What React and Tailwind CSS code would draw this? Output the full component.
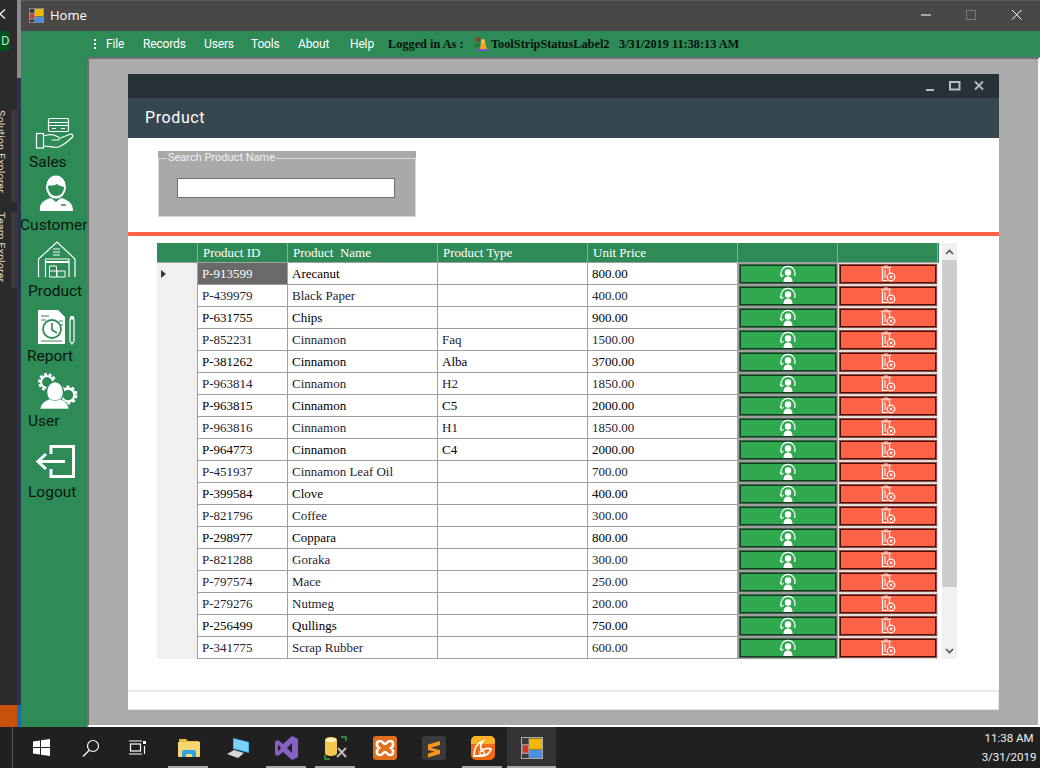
import React from "react";

const rows = [
  ["P-913599", "Arecanut", "", "800.00", 1],
  ["P-439979", "Black Paper", "", "400.00", 0],
  ["P-631755", "Chips", "", "900.00", 1],
  ["P-852231", "Cinnamon", "Faq", "1500.00", 0],
  ["P-381262", "Cinnamon", "Alba", "3700.00", 1],
  ["P-963814", "Cinnamon", "H2", "1850.00", 0],
  ["P-963815", "Cinnamon", "C5", "2000.00", 1],
  ["P-963816", "Cinnamon", "H1", "1850.00", 0],
  ["P-964773", "Cinnamon", "C4", "2000.00", 1],
  ["P-451937", "Cinnamon Leaf Oil", "", "700.00", 0],
  ["P-399584", "Clove", "", "400.00", 1],
  ["P-821796", "Coffee", "", "300.00", 0],
  ["P-298977", "Coppara", "", "800.00", 1],
  ["P-821288", "Goraka", "", "300.00", 0],
  ["P-797574", "Mace", "", "250.00", 0],
  ["P-279276", "Nutmeg", "", "200.00", 0],
  ["P-256499", "Qullings", "", "750.00", 1],
  ["P-341775", "Scrap Rubber", "", "600.00", 0],
];

const serif = "font-['Liberation_Serif',serif]";
const gridCols = "grid grid-cols-[41px_90px_150px_150px_150px_100px_100px]";

function SalesIcon() {
  return (
    <svg className="block w-[60px] h-[36px] ml-[-1px]" viewBox="0 0 60 36" fill="none" stroke="#fff" strokeWidth="1.2">
      <rect x="28.5" y="3.5" width="20" height="13" rx="1.5" />
      <path d="M28.5 7.5h20M28.5 10.5h20" />
      <path d="M32 13.5h4M41 13.5h4" />
      <rect x="16.5" y="18.5" width="7" height="14.5" />
      <path d="M23.5 21c4-1.500 7-2 10-1l5 2c2 1 1 3-1 3h-6" />
      <path d="M23.500 31c5 0 11 2 15 1 5-2 10-6 14-10 1-1 0-3-2-3l-10 4" />
    </svg>
  );
}

function CustomerIcon() {
  return (
    <svg className="block w-[60px] h-[37px] ml-[-1px]" viewBox="0 0 60 37" fill="none">
      <ellipse cx="36" cy="12" rx="10" ry="11.500" fill="#fff" />
      <path d="M28 11c3-1 6 0 9-2 2 2 5 2 7 3 0 5-3 9-8 9s-8-5-8-10z" fill="#2e8b57" />
      <path d="M20 36c-1-7 3-11 11-13l5 4 5-4c8 2 12 6 12 13z" fill="#fff" />
      <path d="M41 30h5" stroke="#2e8b57" strokeWidth="1.500" />
    </svg>
  );
}

function ProductIcon() {
  return (
    <svg className="block w-[60px] h-[38px] ml-[-1px]" viewBox="0 0 60 38" fill="none" stroke="#fff" strokeWidth="1.2">
      <path d="M18.500 37V19L37 2l18 17v18" />
      <path d="M25.500 37V19h23.500v18" />
      <path d="M33 9h7M33 12h7M33 15h7" />
      <path d="M25.500 22h23.500" strokeWidth="2" />
      <path d="M29.500 26h7v11h-7zM29.500 31h7M37 31h8v6h-8z" strokeWidth="1" />
    </svg>
  );
}

function ReportIcon() {
  return (
    <svg className="block w-[60px] h-[38px] ml-[-1px]" viewBox="0 0 60 38" fill="none">
      <path d="M18 2h20l7 7v27H18z" fill="#fff" />
      <circle cx="32" cy="21" r="9" fill="#fff" stroke="#2e8b57" strokeWidth="1.800" />
      <path d="M32 15v7l5 3" stroke="#2e8b57" strokeWidth="1.600" />
      <path d="M21 8h8M21 12h5M21 33h21M39 13h4M41 17h2" stroke="#2e8b57" strokeWidth="1.200" />
      <path d="M50 11h4v22l-2 3-2-3z" fill="#2e8b57" stroke="#fff" strokeWidth="1.200" />
      <path d="M50 8h4v3h-4z" fill="#fff" />
    </svg>
  );
}

function UserIcon() {
  return (
    <svg className="block w-[60px] h-[38px] ml-[-1px]" viewBox="0 0 60 38" fill="none">
      <circle cx="27" cy="10" r="7" stroke="#fff" strokeWidth="4" strokeDasharray="2.600 1.700" />
      <circle cx="27" cy="10" r="6" stroke="#fff" strokeWidth="2" />
      <circle cx="48" cy="23" r="7.500" stroke="#fff" strokeWidth="4" strokeDasharray="2.800 2" />
      <circle cx="48" cy="23" r="6.500" stroke="#fff" strokeWidth="2.500" />
      <ellipse cx="35" cy="20" rx="8.500" ry="10.500" fill="#fff" stroke="#2e8b57" strokeWidth="1.400" />
      <path d="M20 37c1-6 6-9 10-10 3 2 7 2 10 0 4 1 8 4 9 10z" fill="#fff" stroke="#2e8b57" strokeWidth="0.600" />
    </svg>
  );
}

function LogoutIcon() {
  return (
    <svg className="block w-[60px] h-[37px] ml-[-1px]" viewBox="0 0 60 37" fill="none" stroke="#fff">
      <path d="M31 11V3.500h22.500v30H31V26" strokeWidth="3" />
      <path d="M19 18.500h26" strokeWidth="3" />
      <path d="M26 11l-8 7.500 8 7.500" strokeWidth="3" />
    </svg>
  );
}

function SideItem({ icon, label, className, labelClass }) {
  return (
    <div className={className}>
      {icon}
      <div className={"h-[18px] leading-[18px] text-[15.5px] text-[#07170e] whitespace-nowrap " + labelClass}>{label}</div>
    </div>
  );
}

function GreenBtn() {
  return (
    <div className="h-[22px] border-r border-b border-[#a0a0a0] bg-[#a0a0a0] p-[1.5px] pl-[2px] pt-[2px]">
      <div className="h-full border border-[#0f3d1e] outline outline-[#1c4f2c]/70 bg-[#2fa84f] flex items-center justify-center">
        <svg width="18" height="18" viewBox="0 0 18 18" fill="none">
          <path d="M2.500 11A7 7 0 1 1 15.500 11" stroke="#fff" strokeWidth="1.200" />
          <path d="M1 9l1.500 3 2.500-2" stroke="#fff" strokeWidth="1" />
          <circle cx="9" cy="7.500" r="3.200" fill="#fff" />
          <path d="M4.500 17c0-4 2-5.500 4.500-5.500s4.500 1.500 4.500 5.500z" fill="#fff" />
        </svg>
      </div>
    </div>
  );
}

function RedBtn() {
  return (
    <div className="h-[22px] border-r border-b border-[#dcdcdc] bg-[#eeded9] p-[1.5px] pl-[2px] pt-[2px]">
      <div className="h-full border border-[#4f0d03] outline outline-[#5c1005]/70 bg-[#ff6347] flex items-center justify-center">
        <svg width="16" height="17" viewBox="0 0 16 17" fill="none">
          <path d="M1 2.500h10" stroke="#ffc9bd" strokeWidth="2" />
          <path d="M4 1h4" stroke="#ffc9bd" strokeWidth="1" />
          <path d="M2.500 4v11.500h5M9.500 4v4.500" stroke="#fff" strokeWidth="1.200" />
          <path d="M5 5v8" stroke="#fff" strokeWidth="1" />
          <circle cx="11" cy="12" r="3.800" fill="#ff6347" stroke="#fff" strokeWidth="1.200" />
          <path d="M9.500 10.500l3 3M12.500 10.500l-3 3" stroke="#fff" strokeWidth="1" />
        </svg>
      </div>
    </div>
  );
}

function GridRow({ row, index }) {
  const [id, name, type, price, dark] = row;
  const weight = dark ? "text-black" : "text-[#1e2430]";
  const cell = "h-[22px] border-r border-b border-[#a0a0a0] bg-white px-[4px] leading-[21px] whitespace-nowrap overflow-hidden " + weight;
  return (
    <>
      <div className="h-[22px] bg-[#f0f0f0] border-r border-[#a0a0a0] flex items-center pl-[4px]">
        {index === 0 && <div className="w-0 h-0 border-y-[4px] border-y-transparent border-l-[5px] border-l-[#333]" />}
      </div>
      {index === 0 ? (
        <div className="h-[22px] border-r border-b border-[#a0a0a0] bg-[#696969] text-white px-[4px] leading-[21px]">{id}</div>
      ) : (
        <div className={cell}>{id}</div>
      )}
      <div className={cell}>{name}</div>
      <div className={cell}>{type}</div>
      <div className={cell}>{price}</div>
      <GreenBtn />
      <RedBtn />
    </>
  );
}

function TaskIcon({ children, active, underline }) {
  return (
    <div className={"relative w-[49px] h-full flex items-center justify-center " + (active ? "bg-[#343434]" : "")}>
      {children}
      {underline && <div className={"absolute bottom-0 h-[2px] bg-[#a8a8a8] " + (active ? "left-0 right-0" : "left-[4px] right-[5px]")} />}
    </div>
  );
}

function AppLogo({ size }) {
  return (
    <svg width={size} height={size} viewBox="0 0 22 22">
      <rect x="0.500" y="0.500" width="21" height="21" fill="#3a3a3a" stroke="#aaa" />
      <rect x="8" y="1.500" width="13" height="11" fill="#f2b705" />
      <rect x="8" y="13" width="13" height="8" fill="#4a90e2" />
      <rect x="1.500" y="8" width="6" height="8" fill="#d8342a" stroke="#bbb" strokeWidth="0.500" />
      <path d="M1 7.500h7M8 1v20M1 16.500h7" stroke="#aaa" strokeWidth="0.700" />
    </svg>
  );
}

export default function App() {
  return (
    <div className="w-[1040px] h-[768px] overflow-hidden flex flex-col bg-[#1f1f1f] font-['Roboto',sans-serif]">
      <div className="flex h-[727px]">
        {/* IDE strip behind the window */}
        <div className="w-[21px] flex shrink-0 h-full">
          <div className="w-[17px] bg-[#2b2b2e] flex flex-col overflow-hidden">
            <div className="h-[31px] flex items-center">
              <svg width="6" height="10" viewBox="0 0 6 10" className="mt-[-3px]">
                <path d="M5 0.500L0 5l5 4.500" stroke="#eee" strokeWidth="1.400" fill="none" />
              </svg>
            </div>
            <div className="w-[10px] h-[20px] bg-[#01521f] text-[#b9e6c4] text-[13px] leading-[20px] pl-[1px]">D</div>
            <div className="h-[59px]" />
            <div className="h-[92px] w-[17px] flex">
              <div className="w-[11px] overflow-hidden shrink-0">
                <div className="[writing-mode:vertical-rl] ml-[-7px] text-[11px] text-[#e0d0b8] whitespace-nowrap leading-[14px]">Solution Explorer</div>
              </div>
              <div className="w-[6px] bg-[#3a3a3d]" />
            </div>
            <div className="h-[10px]" />
            <div className="h-[76px] w-[17px] flex">
              <div className="w-[11px] overflow-hidden shrink-0">
                <div className="[writing-mode:vertical-rl] ml-[-7px] text-[11px] text-[#e0d0b8] whitespace-nowrap leading-[14px]">Team Explorer</div>
              </div>
              <div className="w-[6px] bg-[#3a3a3d]" />
            </div>
            <div className="flex-1" />
            <div className="h-[22px] bg-[#c9500a]" />
          </div>
          <div className="w-[4px] flex flex-col">
            <div className="h-[78px] bg-[#8a8a8a]" />
            <div className="flex-1 bg-[#27344f]" />
            <div className="h-[22px] bg-[#1a6ea8]" />
          </div>
        </div>

        {/* Window */}
        <div className="flex-1 flex flex-col min-w-0">
          <div className="h-[31px] bg-[#4a4846] border-t border-[#5e5c5a] flex items-center shrink-0">
            <div className="ml-[8px] mt-[-1px]"><AppLogo size={15} /></div>
            <div className="ml-[6px] text-[13px] text-white font-['Open_Sans',sans-serif] mt-[-1px]">Home</div>
            <div className="flex-1" />
            <svg width="120" height="14" viewBox="0 0 120 14" className="mt-[-2px]" fill="none">
              <path d="M1 7h10" stroke="#fff" />
              <rect x="46.500" y="2.500" width="9" height="9" stroke="#777" />
              <path d="M92 2l9.500 9.500M101.500 2L92 11.500" stroke="#fff" />
            </svg>
          </div>

          <div className="h-[26px] bg-[#2e8b57] flex items-center shrink-0 text-[12px] tracking-[-0.15px]">
            <div className="w-[85px] h-full flex items-center justify-end pr-[10px]">
              <div className="flex flex-col gap-[2px]">
                <div className="w-[2px] h-[2px] bg-white" />
                <div className="w-[2px] h-[2px] bg-white" />
                <div className="w-[2px] h-[2px] bg-white" />
              </div>
            </div>
            <div className="w-[37px] text-white">File</div>
            <div className="w-[61px] text-white">Records</div>
            <div className="w-[47px] text-white">Users</div>
            <div className="w-[47px] text-white">Tools</div>
            <div className="w-[52px] text-white">About</div>
            <div className="w-[38px] text-white">Help</div>
            <div className={serif + " text-[12.3px] tracking-normal font-bold text-[#06130c] whitespace-nowrap flex items-center"}>
              <span className="w-[84px]">Logged in As :</span>
              <svg width="17" height="16" viewBox="0 0 17 16" className="mr-[2px]">
                <circle cx="6" cy="3.500" r="2.500" fill="#7a4a20" />
                <path d="M1 11c1-3 3-4 6-4l2 4z" fill="#1f7a2e" />
                <path d="M9 6h4l2 7H8z" fill="#f5a623" />
                <circle cx="11" cy="5" r="2" fill="#f7c04a" />
                <path d="M6 13h10l1 2H6z" fill="#6a5acd" />
              </svg>
              <span className="w-[128px]">ToolStripStatusLabel2</span>
              <span>3/31/2019 11:38:13 AM</span>
            </div>
          </div>

          <div className="flex-1 flex min-h-0">
            {/* Sidebar */}
            <div className="w-[66px] bg-[#2e8b57] shrink-0 flex flex-col pt-[58px]">
              <SideItem icon={<SalesIcon />} label="Sales" labelClass="ml-[8px] mt-[2px]" />
              <SideItem icon={<CustomerIcon />} label="Customer" labelClass="ml-[-1px] mt-[4px]" className="mt-[4px]" />
              <SideItem icon={<ProductIcon />} label="Product" labelClass="ml-[7px] mt-[4px]" className="mt-[6px]" />
              <SideItem icon={<ReportIcon />} label="Report" labelClass="ml-[6px] mt-[1px]" className="mt-[8px]" />
              <SideItem icon={<UserIcon />} label="User" labelClass="ml-[7px] mt-[2px]" className="mt-[7px]" />
              <SideItem icon={<LogoutIcon />} label="Logout" labelClass="ml-[7px] mt-[3px]" className="mt-[13px]" />
            </div>

            {/* MDI area */}
            <div className="flex-1 bg-[#ababab] border-t-2 border-l-2 border-t-[#6f6f6f] border-l-[#6f6f6f] border-r-2 border-b-2 border-r-white border-b-white pt-[15px] pl-[39px]">
              <div className="w-[871px] h-[636px] bg-white flex flex-col">
                <div className="h-[24px] bg-[#263238] flex items-center justify-end shrink-0">
                  <svg width="62" height="12" viewBox="0 0 62 12" fill="none" className="mr-[11px]" stroke="#b4bfc4">
                    <path d="M0 10h8" strokeWidth="2" />
                    <rect x="24" y="2" width="9.500" height="7.500" strokeWidth="2" />
                    <path d="M49 1.500l8 8M57 1.500l-8 8" strokeWidth="1.800" />
                  </svg>
                </div>
                <div className="h-[40px] bg-[#37474f] flex items-center pl-[17px] text-white text-[16px] font-normal tracking-[0.6px] shrink-0">Product</div>

                <div className="h-[98px] shrink-0 pt-[13px] pl-[30px] border-b-4 border-[#ff6347]">
                  <div className="w-[258px] h-[66px] bg-[#a9a9a9]">
                    <fieldset className="h-[66px] border border-[#d8d8d8] px-[18px] pt-[13px] m-0">
                      <legend className="ml-[-10px] px-[1px] text-[11px] leading-[14px] text-[#f2f2f2]">Search Product Name</legend>
                      <div className="w-[218px] h-[20px] bg-white border border-[#6f6f6f]" />
                    </fieldset>
                  </div>
                </div>

                <div className="flex pl-[29px] pt-[7px] shrink-0">
                  <div className={"w-[782px] text-[13px] " + serif}>
                    <div className={gridCols + " bg-[#2e8b57] text-white h-[20px] leading-[19px]"}>
                      <div className="border-r border-b border-[#a0a0a0]" />
                      <div className="border-r border-b border-[#a0a0a0] pl-[5px]">Product ID</div>
                      <div className="border-r border-b border-[#a0a0a0] pl-[5px]">Product&nbsp; Name</div>
                      <div className="border-r border-b border-[#a0a0a0] pl-[5px]">Product Type</div>
                      <div className="border-r border-b border-[#a0a0a0] pl-[5px]">Unit Price</div>
                      <div className="border-r border-b border-[#a0a0a0]" />
                      <div className="border-r border-b border-[#a0a0a0]" />
                    </div>
                    <div className={gridCols}>
                      {rows.map((r, i) => (
                        <GridRow key={r[0]} row={r} index={i} />
                      ))}
                    </div>
                  </div>
                  <div className="ml-[3px] w-[15px] h-[416px] bg-[#f0f0f0] flex flex-col">
                    <div className="h-[17px] flex items-center justify-center">
                      <svg width="9" height="6" viewBox="0 0 9 6" fill="none"><path d="M1 5l3.500-3.500L8 5" stroke="#555" strokeWidth="1.600" /></svg>
                    </div>
                    <div className="h-[327px] bg-[#cdcdcd]" />
                    <div className="flex-1" />
                    <div className="h-[17px] flex items-center justify-center">
                      <svg width="9" height="6" viewBox="0 0 9 6" fill="none"><path d="M1 1l3.500 3.500L8 1" stroke="#555" strokeWidth="1.600" /></svg>
                    </div>
                  </div>
                </div>

                <div className="flex-1" />
                <div className="h-[20px] border-t-2 border-[#e8e8e8] border-b border-b-[#e8e8e8] border-r border-r-[#e8e8e8] shrink-0" />
              </div>
            </div>
          </div>
        </div>
      </div>

      {/* Taskbar */}
      <div className="h-[41px] bg-[#202020] flex items-center text-white relative">
        <div className="w-[1px] h-full bg-[#5a5a5a] ml-[12px] mr-[4px]" />
        <TaskIcon>
          <svg width="17" height="17" viewBox="0 0 17 17" fill="#fff"><path d="M0 2.500l7-1v6.500H0zM8 1.300L17 0v8H8zM0 9h7v6.500l-7-1zM8 9h9v8l-9-1.300z" /></svg>
        </TaskIcon>
        <TaskIcon>
          <svg width="18" height="18" viewBox="0 0 18 18" fill="none" stroke="#fff" strokeWidth="1.200"><circle cx="11" cy="7" r="5.500" /><path d="M7 11.500L1 17.500" /></svg>
        </TaskIcon>
        <TaskIcon>
          <svg width="17" height="15" viewBox="0 0 17 15" fill="none" stroke="#fff" strokeWidth="1.200" className="mr-[5px]">
            <rect x="1.500" y="4" width="10" height="7" />
            <path d="M0 1h13M0 14h13M15.500 6v8" />
            <rect x="14" y="1" width="3" height="3" fill="#fff" stroke="none" />
          </svg>
        </TaskIcon>
        <TaskIcon underline>
          <svg width="22" height="19" viewBox="0 0 22 19">
            <path d="M1 1h7l2 2h11v4H1z" fill="#e8b93c" />
            <path d="M0 4h22v14a1 1 0 0 1-1 1H1a1 1 0 0 1-1-1z" fill="#f7d774" />
            <path d="M4 19v-5a2 2 0 0 1 2-2h10a2 2 0 0 1 2 2v5h-4v-3H8v3z" fill="#2aa4e0" />
          </svg>
        </TaskIcon>
        <TaskIcon>
          <svg width="24" height="20" viewBox="0 0 24 20">
            <path d="M7 0l16 4v11L7 11z" fill="#3fb4ef" />
            <path d="M8 1l14 3.500v9L8 10z" fill="#7fd0f7" />
            <path d="M1 16l7-4 10 3-6 5z" fill="#d8d8d8" />
          </svg>
        </TaskIcon>
        <TaskIcon underline>
          <svg width="23" height="24" viewBox="0 0 23 24">
            <path d="M17 0l6 3v18l-6 3-9-8-5 4-3-1.500V5.500L3 4l5 4zM3 8.500v7L6 12zM17 7l-5 5 5 5z" fill="#8661c5" />
          </svg>
        </TaskIcon>
        <TaskIcon underline>
          <svg width="24" height="24" viewBox="0 0 24 24" fill="none">
            <path d="M1 4c0-4 12-4 12 0v13c0 4-12 4-12 0z" fill="#f4c64a" />
            <ellipse cx="7" cy="4" rx="5" ry="2" fill="#fff3c4" />
            <path d="M17 1h5v4M1 19v4h5" stroke="#35a847" strokeWidth="1.500" />
            <path d="M13 21l9-9M14 12l8 9" stroke="#bbb" strokeWidth="2" />
          </svg>
        </TaskIcon>
        <TaskIcon>
          <svg width="24" height="24" viewBox="0 0 24 24" fill="none">
            <rect width="24" height="24" rx="3" fill="#e0701d" />
            <path d="M7 5c3 0 3 3 5 3s2-3 5-3c4 0 4 5 1 7 3 2 3 7-1 7-3 0-3-3-5-3s-2 3-5 3c-4 0-4-5-1-7-3-2-3-7 1-7z" stroke="#fff" strokeWidth="2.500" />
          </svg>
        </TaskIcon>
        <TaskIcon>
          <svg width="24" height="24" viewBox="0 0 24 24">
            <rect width="24" height="24" rx="3" fill="#3a3a3a" />
            <path d="M18 5v4l-12 3.500V8.500zM6 11l12 3v4L6 21.500v-4l6.500-2L6 14z" fill="#f5951d" />
          </svg>
        </TaskIcon>
        <TaskIcon underline>
          <svg width="24" height="24" viewBox="0 0 24 24" fill="none">
            <rect width="24" height="24" rx="5" fill="#f26a0f" />
            <path d="M0 5a5 5 0 0 1 5-5h14a5 5 0 0 1 5 5v3H0z" fill="#f9b224" />
            <path d="M3 20c0-8 3-13 9-15-3 4-3 7-1 9 3-1 5-3 9-1-1 4-5 7-10 7z" stroke="#fff" strokeWidth="1.800" />
            <circle cx="11" cy="17" r="2.200" stroke="#fff" strokeWidth="1.200" />
          </svg>
        </TaskIcon>
        <TaskIcon active underline>
          <AppLogo size={22} />
        </TaskIcon>
        <div className="flex-1" />
        <div className="w-[60px] mr-[1px] text-[11.5px] leading-[19px] text-center text-[#f0f0f0]">
          <div>11:38 AM</div>
          <div>3/31/2019</div>
        </div>
      </div>
    </div>
  );
}
